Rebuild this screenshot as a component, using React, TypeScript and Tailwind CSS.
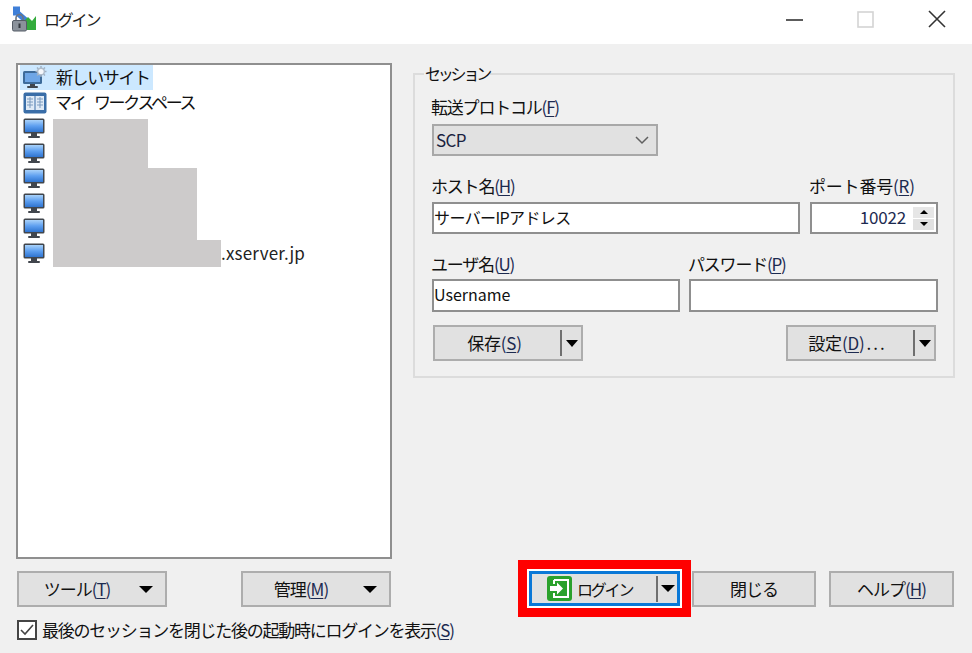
import React from "react";

const font = "font-['Noto_Sans_CJK_JP','Noto_Sans',sans-serif]";

function Caret({ small }: { small?: boolean }) {
	return (
		<span
			className={
				small
					? "block w-0 h-0 border-x-[6px] border-x-transparent border-t-[7px] border-t-black"
					: "block w-0 h-0 border-x-[7px] border-x-transparent border-t-[7px] border-t-black"
			}
		/>
	);
}

function Monitor() {
	return (
		<svg width="22" height="21" viewBox="0 0 22 21" className="shrink-0">
			<defs>
				<linearGradient id="screen" x1="0" y1="0" x2="0" y2="1">
					<stop offset="0" stopColor="#a9d2fa" />
					<stop offset="0.5" stopColor="#5d9ff0" />
					<stop offset="1" stopColor="#2f74d0" />
				</linearGradient>
			</defs>
			<rect x="0.5" y="0.5" width="21" height="15" rx="1.5" fill="#41464d" />
			<rect x="2" y="2" width="18" height="12" fill="url(#screen)" />
			<rect x="8" y="15" width="6" height="3" fill="#41464d" />
			<rect x="5" y="18" width="12" height="2" rx="1" fill="#41464d" />
		</svg>
	);
}

function NewSiteIcon() {
	return (
		<svg width="25" height="23" viewBox="0 0 25 23" className="shrink-0">
			<rect x="1" y="5" width="19" height="13" rx="1.5" fill="#3d6b9a" />
			<rect x="3" y="7" width="15" height="9" fill="#6ea6e6" />
			<rect x="8" y="18" width="5" height="2" fill="#41464d" />
			<rect x="5" y="20" width="11" height="2" rx="1" fill="#41464d" />
			<path d="M19 0v11M13.5 5.5h11M15 1.5l8 8M23 1.5l-8 8" stroke="#9fb0c2" strokeWidth="1.4" />
			<circle cx="19" cy="5.5" r="4" fill="#aebccb" />
			<circle cx="19" cy="5.5" r="2.6" fill="#f4f7fb" />
		</svg>
	);
}

function BookIcon() {
	return (
		<svg width="24" height="22" viewBox="0 0 24 22" className="shrink-0">
			<rect x="0.5" y="0.5" width="23" height="21" rx="2" fill="#3a6ea8" />
			<rect x="3" y="4" width="8.5" height="14" fill="#dfeaf6" />
			<rect x="12.5" y="4" width="8.5" height="14" fill="#dfeaf6" />
			<path d="M4 7h6M4 10h6M4 13h6M14 7h6M14 10h6M14 13h6M7 5v11M17 5v11" stroke="#7d9cc0" strokeWidth="1" />
		</svg>
	);
}

function AppIcon() {
	return (
		<svg width="26" height="26" viewBox="0 0 26 26">
			<path d="M2 0.5h7v5l8 7-4 4-8-7H2z" fill="#3f7fd8" />
			<path d="M25 10v14H12l4-4-4-4 5-5 4 4z" fill="#34ab3c" />
			<path d="M5 15v-3a3.5 3.5 0 0 1 7 0v3" fill="none" stroke="#6d7580" strokeWidth="1.6" />
			<rect x="1.5" y="14.5" width="14" height="10.5" rx="1.5" fill="#8b929b" stroke="#555c66" />
			<rect x="7.5" y="17.5" width="2" height="4.5" fill="#33383f" />
		</svg>
	);
}

function LoginIcon() {
	return (
		<svg width="25" height="25" viewBox="0 0 25 25">
			<rect width="25" height="25" rx="3" fill="#2aa12c" />
			<path d="M7 4h14v17H7v-4" fill="none" stroke="#fff" strokeWidth="2" />
			<path d="M7 4v4" stroke="#fff" strokeWidth="2" />
			<path d="M3 10h7V6.5l6 6-6 6V15H3z" fill="#fff" />
		</svg>
	);
}

function Shortcut({ k }: { k: string }) {
	return <span className="text-[#1c2a50]">(<span className="underline underline-offset-2">{k}</span>)</span>;
}

function Label({ children, className }: { children: React.ReactNode; className?: string }) {
	return <div className={`h-[22px] leading-[22px] -ml-px whitespace-nowrap ${className ?? "tracking-[-1.2px]"}`}>{children}</div>;
}

function Button({ children, className, split }: { children: React.ReactNode; className: string; split?: boolean }) {
	return (
		<div className={`flex items-center h-[36px] bg-[#e1e1e1] border-2 border-[#adadad] ${split ? "tracking-[-0.2px]" : "tracking-[-1px]"} ${className}`}>
			<span className={`flex-1 flex justify-center items-center whitespace-nowrap ${split ? "pr-[6px]" : ""}`}>{children}</span>
			{split && <span className="w-[2px] h-[26px] bg-[#6f6f6f]" />}
			{split !== undefined && (
				<span className={`flex justify-center shrink-0 ${split ? "w-[19px]" : "w-[30px] mr-1"}`}>
					<Caret small={split} />
				</span>
			)}
		</div>
	);
}

const sites = [0, 1, 2, 3, 4, 5];

export default function App() {
	return (
		<div className={`w-[972px] h-[653px] bg-[#f0f0f0] text-[17px] text-[#111] overflow-hidden flex flex-col ${font}`}>
			{/* Title bar */}
			<div className="h-[44px] bg-white flex items-center shrink-0">
				<div className="ml-[11px] mr-[7px] mt-[-7px]">
					<AppIcon />
				</div>
				<span className="mt-[-6px] text-[16px] tracking-[-2.2px] text-[#222]">ログイン</span>
				<div className="ml-auto mr-[26px] mt-[-6px] flex items-center gap-[54px]">
					<svg width="17" height="17" viewBox="0 0 17 17">
						<path d="M0 9h17" stroke="#333" strokeWidth="1.6" />
					</svg>
					<svg width="17" height="17" viewBox="0 0 17 17">
						<rect x="1" y="1" width="15" height="15" fill="none" stroke="#d4d4d4" strokeWidth="1.6" />
					</svg>
					<svg width="18" height="18" viewBox="0 0 18 18">
						<path d="M1 1l16 16M17 1L1 17" stroke="#333" strokeWidth="1.6" />
					</svg>
				</div>
			</div>

			<div className="flex pt-[19px] pl-[16px]">
				{/* Left column */}
				<div className="w-[376px] shrink-0">
					<div className="relative h-[496px] bg-white border-2 border-[#8f8f8f] pl-0.5">
						<div className="flex items-center h-[25px] w-[133px] bg-[#cce8ff]">
							<span className="ml-[2px] mr-[9px]">
								<NewSiteIcon />
							</span>
							<span className="tracking-[-1.4px] mt-[-1px]">新しいサイト</span>
						</div>
						<div className="flex items-center h-[25px]">
							<span className="ml-[3px] mr-[8px] mt-[1px]">
								<BookIcon />
							</span>
							<span className="tracking-[-2.3px] [word-spacing:8px] mt-[-1px]">マイ ワークスペース</span>
						</div>
						{sites.map((i) => (
							<div key={i} className="flex items-center h-[25px]">
								<span className="ml-[3px] mt-[2px]">
									<Monitor />
								</span>
								{i === 5 && <span className="ml-[176px] tracking-[0.2px] text-[#222]">.xserver.jp</span>}
							</div>
						))}
						{/* redacted hostnames */}
						<div className="absolute left-[35px] top-[54px] w-[95px] h-[49px] bg-[#cdcbcb]" />
						<div className="absolute left-[35px] top-[103px] w-[144px] h-[72px] bg-[#cdcbcb]" />
						<div className="absolute left-[35px] top-[175px] w-[168px] h-[27px] bg-[#cdcbcb]" />
					</div>
					<div className="flex justify-between mt-[12px] pl-px pr-px">
						<Button className="w-[150px] pl-1" split={false}>
							ツール
							<Shortcut k="T" />
						</Button>
						<Button className="w-[150px] pl-1" split={false}>
							管理
							<Shortcut k="M" />
						</Button>
					</div>
				</div>

				{/* Right column */}
				<div className="ml-[21px] w-[542px] flex flex-col">
					<div className="relative mt-[10px] h-[305px] border-2 border-[#dcdcdc] pl-[17px] pr-[15px] pt-[21px]">
						<span className="absolute left-[9px] top-[-13px] bg-[#f0f0f0] px-[1px] h-[22px] leading-[22px] tracking-[-3.2px] text-[16px]">セッション</span>
						<Label>
							転送プロトコル
							<Shortcut k="F" />
						</Label>
						<div className="w-[226px] h-[32px] mt-[6px] border-2 border-[#a8a8a8] bg-[#e1e1e1] flex items-center justify-between pl-[2px] pr-[6px]">
							<span className="text-[#1a2240] tracking-[-0.6px]">SCP</span>
							<svg width="16" height="9" viewBox="0 0 16 9">
								<path d="M2 1l6 6 6-6" fill="none" stroke="#606060" strokeWidth="1.5" />
							</svg>
						</div>
						<div className="flex gap-[10px] mt-[19px]">
							<div className="w-[368px]">
								<Label>
									ホスト名
									<Shortcut k="H" />
								</Label>
								<div className="h-[32px] mt-[5px] pb-[3px] border-2 border-[#8f8f8f] bg-white flex items-center text-[16px] tracking-[-0.6px]">
									サーバーIPアドレス
								</div>
							</div>
							<div className="w-[128px]">
								<Label className="tracking-[-0.2px]">
									ポート番号
									<Shortcut k="R" />
								</Label>
								<div className="h-[32px] mt-[5px] border-2 border-[#8f8f8f] bg-white flex items-center justify-end text-[#1c2a50]">
									<span className="mr-[7px] mt-[-2px] tracking-[-0.2px]">10022</span>
									<span className="flex flex-col gap-[1px] mr-[2px]">
										<span className="w-[21px] h-[11px] bg-[#e6e6e6] flex items-center justify-center">
											<span className="w-0 h-0 border-x-[4px] border-x-transparent border-b-[4px] border-b-black" />
										</span>
										<span className="w-[21px] h-[11px] bg-[#e1e1e1] flex items-center justify-center">
											<span className="w-0 h-0 border-x-[4px] border-x-transparent border-t-[4px] border-t-black" />
										</span>
									</span>
								</div>
							</div>
						</div>
						<div className="flex gap-[9px] mt-[19px]">
							<div className="w-[248px]">
								<Label>
									ユーザ名
									<Shortcut k="U" />
								</Label>
								<div className="h-[33px] mt-[4px] pb-[3px] border-2 border-[#8f8f8f] bg-white flex items-center text-[16px]">
									Username
								</div>
							</div>
							<div className="w-[249px]">
								<Label>
									パスワード
									<Shortcut k="P" />
								</Label>
								<div className="h-[33px] mt-[4px] border-2 border-[#8f8f8f] bg-white" />
							</div>
						</div>
						<div className="flex justify-between mt-[13px] pl-px pr-[2px]">
							<Button className="w-[150px]" split>
								保存
								<Shortcut k="S" />
							</Button>
							<Button className="w-[150px]" split>
								設定
								<Shortcut k="D" />
								<span className="tracking-[2px] ml-[2px]">...</span>
							</Button>
						</div>
					</div>

					{/* Bottom buttons */}
					<div className="flex items-center mt-[182px]">
						<div className="ml-[105px] w-[173px] h-[57px] border-[9px] border-[#ff0000] bg-white flex items-center justify-center">
							<div className="w-[151px] h-[35px] border-[3px] border-[#0a78d7] bg-[#e1e1e1] flex items-center">
								<span className="ml-[15px] mr-[5px]">
									<LoginIcon />
								</span>
								<span className="flex-1 text-[16px] tracking-[-2.2px]">ログイン</span>
								<span className="w-[2px] h-[26px] bg-[#6f6f6f]" />
								<span className="w-[19px] flex justify-center">
									<Caret />
								</span>
							</div>
						</div>
						<Button className="w-[124px] ml-px">閉じる</Button>
						<Button className="w-[125px] ml-[13px]">
							ヘルプ
							<Shortcut k="H" />
						</Button>
					</div>
				</div>
			</div>

			{/* Checkbox row */}
			<div className="flex items-center ml-[17px] tracking-[-1.25px] whitespace-nowrap">
				<span className="w-[20px] h-[20px] border-2 border-[#444] bg-white flex items-center justify-center mr-[5px]">
					<svg width="14" height="12" viewBox="0 0 14 12">
						<path d="M1 6l4 4 8-9" fill="none" stroke="#444" strokeWidth="1.6" />
					</svg>
				</span>
				最後のセッションを閉じた後の起動時にログインを表示
				<Shortcut k="S" />
			</div>
		</div>
	);
}
